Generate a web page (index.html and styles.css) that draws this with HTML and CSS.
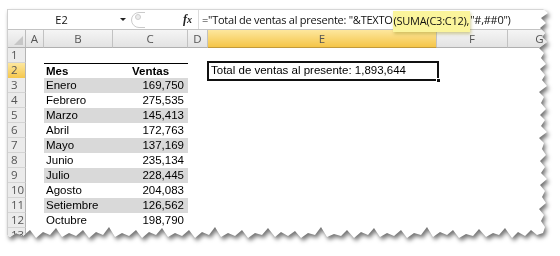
FILE: index.html
```html
<!DOCTYPE html>
<html lang="es">
<head>
    <meta charset="UTF-8">
    <title>Total de ventas al presente</title>
    <link rel="stylesheet" href="styles.css">
</head>
<body>
    <div class="paper">
        <div class="sheet">
            <!-- formula bar -->
            <div class="fbar">
                <div class="namebox">E2</div>
                <div class="nb-arrow"></div>
                <svg class="grip" width="16" height="18" viewBox="0 0 16 18">
                    <path d="M15 1.5 H9 A7.5 7.5 0 0 0 9 16.5 H15" fill="none" stroke="#cbcbcb"/>
                    <circle cx="8" cy="6" r="2.5" fill="#ececec" stroke="#cdcdcd"/>
                </svg>
                <div class="fx"><i>f</i><i class="x">x</i></div>
                <div class="formula">="Total de ventas al presente: "&amp;TEXTO<span class="hl">(SUMA(C3:C12),</span>"#,##0")</div>
            </div>

            <!-- column headers -->
            <div class="row hdr">
                <div class="corner"><span class="tri"></span></div>
                <div class="ch">A</div>
                <div class="ch">B</div>
                <div class="ch">C</div>
                <div class="ch">D</div>
                <div class="ch sel">E</div>
                <div class="ch">F</div>
                <div class="ch">G</div>
            </div>

            <div class="row"><div class="rh">1</div><div></div><div></div><div></div><div></div><div></div><div></div><div></div></div>
            <div class="row">
                <div class="rh sel">2</div><div></div>
                <div class="c b top">Mes</div><div class="c b top mid">Ventas</div>
                <div></div>
                <div class="c active">Total de ventas al presente: 1,893,644</div>
                <div></div><div></div>
            </div>
            <div class="row"><div class="rh">3</div><div></div><div class="c g">Enero</div><div class="c num g">169,750</div><div></div><div></div><div></div><div></div></div>
            <div class="row"><div class="rh">4</div><div></div><div class="c">Febrero</div><div class="c num">275,535</div><div></div><div></div><div></div><div></div></div>
            <div class="row"><div class="rh">5</div><div></div><div class="c g">Marzo</div><div class="c num g">145,413</div><div></div><div></div><div></div><div></div></div>
            <div class="row"><div class="rh">6</div><div></div><div class="c">Abril</div><div class="c num">172,763</div><div></div><div></div><div></div><div></div></div>
            <div class="row"><div class="rh">7</div><div></div><div class="c g">Mayo</div><div class="c num g">137,169</div><div></div><div></div><div></div><div></div></div>
            <div class="row"><div class="rh">8</div><div></div><div class="c">Junio</div><div class="c num">235,134</div><div></div><div></div><div></div><div></div></div>
            <div class="row"><div class="rh">9</div><div></div><div class="c g">Julio</div><div class="c num g">228,445</div><div></div><div></div><div></div><div></div></div>
            <div class="row"><div class="rh">10</div><div></div><div class="c">Agosto</div><div class="c num">204,083</div><div></div><div></div><div></div><div></div></div>
            <div class="row"><div class="rh">11</div><div></div><div class="c g">Setiembre</div><div class="c num g">126,562</div><div></div><div></div><div></div><div></div></div>
            <div class="row"><div class="rh">12</div><div></div><div class="c">Octubre</div><div class="c num">198,790</div><div></div><div></div><div></div><div></div></div>
            <div class="row"><div class="rh">13</div><div></div><div></div><div></div><div></div><div></div><div></div><div></div></div>
        </div>
    </div>
</body>
</html>
```

FILE: styles.css
```css
body {
    margin: 0;
    background: white;
    width: 560px;
    height: 256px;
    overflow: hidden;
}
.paper {
    padding: 9px 0 0 7px;
    filter: drop-shadow(2px 3px 2px rgba(0,0,0,0.55));
}
.sheet {
    width: 545px;
    height: 240px;
    background: white;
    border-left: 1px solid #cfcfcf;
    box-sizing: border-box;
    overflow: hidden;
    clip-path: polygon(0 0, 536px 0, 541px 4px, 534px 9px, 539px 14px, 533px 19px, 538px 24px, 535px 28px, 540px 33px, 532px 39px, 537px 44px, 534px 49px, 539px 55px, 533px 60px, 538px 66px, 535px 71px, 540px 77px, 532px 83px, 537px 88px, 534px 94px, 539px 100px, 533px 106px, 538px 111px, 534px 117px, 540px 123px, 532px 129px, 537px 134px, 535px 140px, 539px 146px, 533px 152px, 538px 158px, 534px 164px, 540px 170px, 533px 176px, 538px 182px, 535px 188px, 539px 194px, 532px 200px, 537px 206px, 534px 212px, 538px 218px, 536px 224px, 530px 226px, 524px 221px, 518px 227px, 511px 223px, 505px 229px, 498px 219px, 492px 226px, 486px 224px, 479px 228px, 472px 220px, 466px 227px, 459px 225px, 452px 229px, 446px 221px, 440px 226px, 433px 223px, 426px 228px, 420px 218px, 414px 226px, 407px 224px, 400px 229px, 394px 221px, 387px 227px, 380px 224px, 373px 228px, 367px 219px, 361px 226px, 354px 223px, 347px 229px, 340px 221px, 334px 227px, 327px 225px, 320px 228px, 314px 218px, 308px 226px, 301px 224px, 294px 229px, 288px 222px, 281px 227px, 274px 223px, 268px 228px, 261px 219px, 255px 226px, 248px 224px, 241px 229px, 235px 221px, 228px 227px, 221px 224px, 214px 228px, 208px 218px, 202px 226px, 195px 223px, 188px 229px, 182px 221px, 175px 227px, 168px 224px, 161px 228px, 155px 219px, 149px 226px, 142px 223px, 135px 229px, 129px 221px, 122px 227px, 115px 224px, 108px 228px, 102px 218px, 96px 226px, 89px 223px, 82px 229px, 76px 221px, 69px 227px, 62px 224px, 55px 228px, 49px 219px, 43px 226px, 36px 223px, 29px 229px, 23px 221px, 16px 227px, 9px 224px, 3px 228px, 0 226px);
}

/* formula bar */
.fbar {
    display: flex;
    align-items: center;
    height: 19px;
    border-top: 1px solid #d6d6d6;
    border-bottom: 1px solid #c3c3c3;
    font-family: "Open Sans", sans-serif;
    color: #111;
}
.namebox {
    width: 107px;
    text-align: center;
    font-size: 11px;
}
.nb-arrow {
    width: 0;
    height: 0;
    margin-left: 5px;
    border-left: 3px solid transparent;
    border-right: 3px solid transparent;
    border-top: 3px solid #222;
}
.grip {
    margin-left: 4px;
}
.fx {
    margin-left: 37px;
    width: 15px;
    font-family: "Liberation Serif", serif;
    font-weight: bold;
    font-size: 12px;
    color: #222;
}
.fx .x {
    font-size: 10px;
}
.formula {
    height: 19px;
    line-height: 19px;
    border-left: 1px solid #dcdcdc;
    padding-left: 3px;
    font-size: 11px;
    letter-spacing: -0.25px;
    white-space: nowrap;
}
.hl {
    position: relative;
    top: 1px;
    padding: 2px 1px 4px 1px;
    background: #fbf59c;
    box-shadow: 1px 2px 3px rgba(160,150,40,0.45);
}

/* grid */
.row {
    display: grid;
    grid-template-columns: 18px 18px 69px 75px 20px 229px 71px 64px;
    height: 15px;
}
.row.hdr {
    height: 18px;
}
.corner {
    position: relative;
    background: linear-gradient(#f4f4f4, #e2e2e2);
    border-right: 1px solid #bcbcbc;
    border-bottom: 1px solid #b0b0b0;
}
.tri {
    position: absolute;
    right: 2px;
    bottom: 2px;
    width: 0;
    height: 0;
    border-left: 9px solid transparent;
    border-bottom: 9px solid #c6c6c6;
}
.ch {
    background: linear-gradient(#f5f5f5, #e3e3e3);
    border-right: 1px solid #c2c2c2;
    border-bottom: 1px solid #b0b0b0;
    font-family: "Open Sans", sans-serif;
    font-size: 11.5px;
    line-height: 17px;
    color: #555;
    text-align: center;
}
.ch.sel {
    background: linear-gradient(#fde79e, #f5c548);
    border-bottom-color: #c29a3b;
}
.rh {
    background: #ebebeb;
    border-right: 1px solid #b4b4b4;
    border-bottom: 1px solid #d4d4d4;
    font-family: "Open Sans", sans-serif;
    font-size: 11.5px;
    line-height: 14px;
    color: #555;
    padding-left: 3px;
}
.rh.sel {
    background: linear-gradient(#fde79e, #f5c548);
}
.c {
    font-family: "Liberation Sans", Arial, sans-serif;
    font-size: 11.5px;
    line-height: 15px;
    color: #000;
    padding: 0 2px;
    white-space: nowrap;
}
.c.b {
    font-weight: bold;
}
.c.top {
    box-shadow: inset 0 1px #000;
    line-height: 17px;
}
.c.mid {
    text-align: center;
}
.c.num {
    text-align: right;
    padding-right: 4px;
}
.c.g {
    background: #d9d9d9;
}
.c.active {
    position: relative;
    padding-left: 3px;
}
.c.active::after {
    content: "";
    position: absolute;
    top: -2px;
    left: -1px;
    right: -2px;
    bottom: -1px;
    border: 2px solid #111;
}
.c.active::before {
    content: "";
    position: absolute;
    right: -4px;
    bottom: -3px;
    width: 5px;
    height: 5px;
    background: #111;
    border: 1px solid white;
    box-sizing: border-box;
    z-index: 1;
}
```
